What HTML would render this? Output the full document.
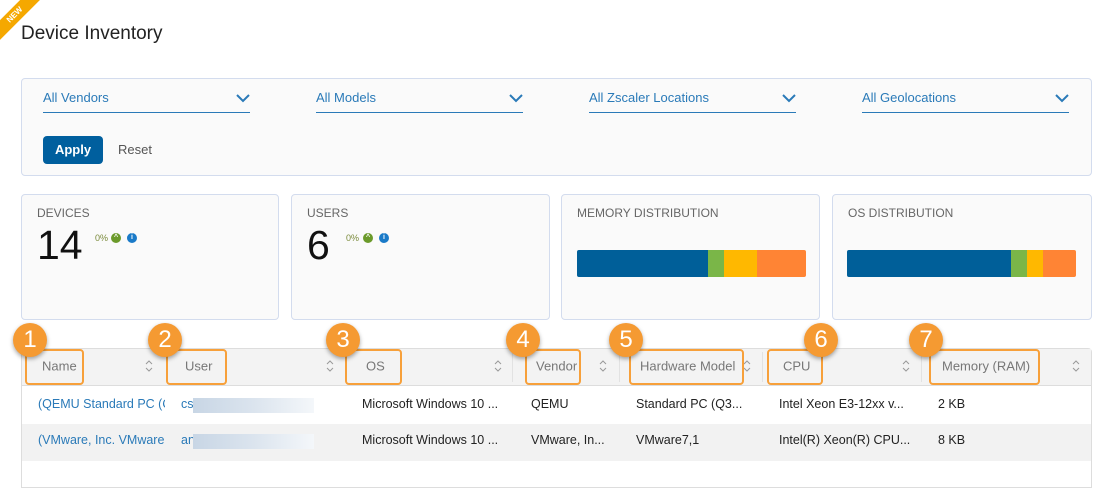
<!DOCTYPE html>
<html><head><style>
*{box-sizing:border-box;margin:0;padding:0}
body{width:1101px;height:470px;overflow:hidden;background:#fff;font-family:"Liberation Sans",sans-serif;position:relative;color:#333}
.a{position:absolute}
.panel{border:1px solid #d3dcee;border-radius:4px;background:#fafafa}
.dd{position:absolute;top:90px;height:23px;border-bottom:1px solid #2a7ab8;color:#2a7ab8;font-size:13px;width:207px}
.dd svg{position:absolute;right:0;top:4px}
.card .t{position:absolute;left:15px;top:11px;font-size:12px;color:#666}
.big{position:absolute;left:15px;top:27px;font-size:41px;color:#111}
.pct{position:absolute;top:38px;font-size:9px;color:#7a8a3a}
.dot{position:absolute;width:10px;height:10px;border-radius:50%;top:38px;color:#fff;font-size:7px;font-weight:bold;text-align:center;line-height:10px}
.th{position:absolute;top:366px;font-size:13px;color:#777;transform:translateY(-50%)}
.sort{position:absolute;top:359px;width:8px;height:14px}
.cell{position:absolute;font-size:12.5px;color:#222;white-space:nowrap}
.ob{position:absolute;border:2px solid #f7a03a;border-radius:4px;top:349px;height:36px}
.cn{position:absolute;width:34px;height:34px;border-radius:50%;background:#f59a32;color:#fff;font-size:24px;text-align:center;line-height:34px;top:323px;box-shadow:0 2px 4px rgba(0,0,0,.35)}
.bar{position:absolute;top:250px;height:27px;display:flex;border-radius:2px;overflow:hidden}
</style></head><body>
<div class="a" style="width:70px;height:14px;background:#f5a800;transform:rotate(-45deg);color:#fff;font-size:8px;font-weight:bold;text-align:center;line-height:14px;top:8px;left:-20px">NEW</div>
<div class="a" style="left:21px;top:23px;font-size:19px;color:#222">Device Inventory</div>

<div class="a panel" style="left:21px;top:78px;width:1071px;height:98px"></div>
<div class="dd" style="left:43px">All Vendors<svg width="14" height="9"><path d="M1 1l6 6 6-6" stroke="#2a7ab8" stroke-width="2" fill="none"/></svg></div>
<div class="dd" style="left:316px">All Models<svg width="14" height="9"><path d="M1 1l6 6 6-6" stroke="#2a7ab8" stroke-width="2" fill="none"/></svg></div>
<div class="dd" style="left:589px">All Zscaler Locations<svg width="14" height="9"><path d="M1 1l6 6 6-6" stroke="#2a7ab8" stroke-width="2" fill="none"/></svg></div>
<div class="dd" style="left:862px">All Geolocations<svg width="14" height="9"><path d="M1 1l6 6 6-6" stroke="#2a7ab8" stroke-width="2" fill="none"/></svg></div>
<div class="a" style="left:43px;top:136px;width:60px;height:28px;background:#005f9e;border-radius:4px;color:#fff;font-size:13px;font-weight:bold;text-align:center;line-height:28px">Apply</div>
<div class="a" style="left:118px;top:142px;font-size:13px;color:#555">Reset</div>

<div class="a panel card" style="left:21px;top:194px;width:258px;height:126px"><div class="t">DEVICES</div><div class="big">14</div><div class="pct" style="left:73px">0%</div><div class="dot" style="left:89px;background:#6b9a2a">^</div><div class="dot" style="left:105px;background:#1a7ac8">i</div></div>
<div class="a panel card" style="left:291px;top:194px;width:259px;height:126px"><div class="t">USERS</div><div class="big">6</div><div class="pct" style="left:54px">0%</div><div class="dot" style="left:71px;background:#6b9a2a">^</div><div class="dot" style="left:87px;background:#1a7ac8">i</div></div>
<div class="a panel card" style="left:561px;top:194px;width:259px;height:126px"><div class="t">MEMORY DISTRIBUTION</div></div>
<div class="a panel card" style="left:832px;top:194px;width:260px;height:126px"><div class="t">OS DISTRIBUTION</div></div>
<div class="bar" style="left:577px;width:229px"><div style="width:131px;background:#005f99"></div><div style="width:16px;background:#7ab648"></div><div style="width:33px;background:#ffb800"></div><div style="flex:1;background:#ff8434"></div></div>
<div class="bar" style="left:847px;width:229px"><div style="width:164px;background:#005f99"></div><div style="width:16px;background:#7ab648"></div><div style="width:16px;background:#ffb800"></div><div style="flex:1;background:#ff8434"></div></div>

<div class="a" style="left:21px;top:348px;width:1071px;height:140px;border:1px solid #ddd;border-radius:4px 4px 0 0"></div>
<div class="a" style="left:22px;top:349px;width:1069px;height:37px;background:#f3f3f3;border-bottom:1px solid #ddd"></div>
<div class="a" style="left:22px;top:424px;width:1069px;height:37px;background:#f2f2f2"></div>
<div class="a" style="left:512px;top:352px;width:1px;height:30px;background:#e2e2e2"></div>
<div class="a" style="left:619px;top:352px;width:1px;height:30px;background:#e2e2e2"></div>
<div class="a" style="left:762px;top:352px;width:1px;height:30px;background:#e2e2e2"></div>
<div class="a" style="left:921px;top:352px;width:1px;height:30px;background:#e2e2e2"></div>

<div class="th" style="left:42px">Name</div>
<div class="th" style="left:185px">User</div>
<div class="th" style="left:366px">OS</div>
<div class="th" style="left:536px">Vendor</div>
<div class="th" style="left:640px">Hardware Model</div>
<div class="th" style="left:783px">CPU</div>
<div class="th" style="left:942px">Memory (RAM)</div>
<svg class="sort" style="left:145px" viewBox="0 0 8 14"><path d="M1 5l3-3 3 3M1 9l3 3 3-3" stroke="#999" fill="none"/></svg>
<svg class="sort" style="left:326px" viewBox="0 0 8 14"><path d="M1 5l3-3 3 3M1 9l3 3 3-3" stroke="#999" fill="none"/></svg>
<svg class="sort" style="left:494px" viewBox="0 0 8 14"><path d="M1 5l3-3 3 3M1 9l3 3 3-3" stroke="#999" fill="none"/></svg>
<svg class="sort" style="left:599px" viewBox="0 0 8 14"><path d="M1 5l3-3 3 3M1 9l3 3 3-3" stroke="#999" fill="none"/></svg>
<svg class="sort" style="left:743px" viewBox="0 0 8 14"><path d="M1 5l3-3 3 3M1 9l3 3 3-3" stroke="#999" fill="none"/></svg>
<svg class="sort" style="left:902px" viewBox="0 0 8 14"><path d="M1 5l3-3 3 3M1 9l3 3 3-3" stroke="#999" fill="none"/></svg>
<svg class="sort" style="left:1072px" viewBox="0 0 8 14"><path d="M1 5l3-3 3 3M1 9l3 3 3-3" stroke="#999" fill="none"/></svg>

<div class="cell" style="left:38px;top:397px;color:#2a7ab8;width:127px;overflow:hidden">(QEMU Standard PC (Q35</div>
<div class="cell" style="left:181px;top:397px;color:#2a7ab8">cs</div>
<div class="a" style="left:193px;top:398px;width:121px;height:15px;background:linear-gradient(90deg,#c8d6e5,#dbe4ee,#f4f7fa)"></div>
<div class="cell" style="left:362px;top:397px">Microsoft Windows 10 ...</div>
<div class="cell" style="left:531px;top:397px">QEMU</div>
<div class="cell" style="left:636px;top:397px">Standard PC (Q3...</div>
<div class="cell" style="left:779px;top:397px">Intel Xeon E3-12xx v...</div>
<div class="cell" style="left:938px;top:397px">2 KB</div>

<div class="cell" style="left:38px;top:433px;color:#2a7ab8;width:127px;overflow:hidden">(VMware, Inc. VMware7</div>
<div class="cell" style="left:181px;top:433px;color:#2a7ab8">an</div>
<div class="a" style="left:193px;top:434px;width:121px;height:15px;background:linear-gradient(90deg,#c8d6e5,#dbe4ee,#f4f7fa)"></div>
<div class="cell" style="left:362px;top:433px">Microsoft Windows 10 ...</div>
<div class="cell" style="left:531px;top:433px">VMware, In...</div>
<div class="cell" style="left:636px;top:433px">VMware7,1</div>
<div class="cell" style="left:779px;top:433px">Intel(R) Xeon(R) CPU...</div>
<div class="cell" style="left:938px;top:433px">8 KB</div>

<div class="ob" style="left:25px;width:59px"></div>
<div class="ob" style="left:166px;width:61px"></div>
<div class="ob" style="left:345px;width:57px"></div>
<div class="ob" style="left:525px;width:56px"></div>
<div class="ob" style="left:629px;width:115px"></div>
<div class="ob" style="left:767px;width:56px"></div>
<div class="ob" style="left:929px;width:111px"></div>
<div class="cn" style="left:13px">1</div>
<div class="cn" style="left:148px">2</div>
<div class="cn" style="left:326px">3</div>
<div class="cn" style="left:506px">4</div>
<div class="cn" style="left:609px">5</div>
<div class="cn" style="left:804px">6</div>
<div class="cn" style="left:909px">7</div>
</body></html>
